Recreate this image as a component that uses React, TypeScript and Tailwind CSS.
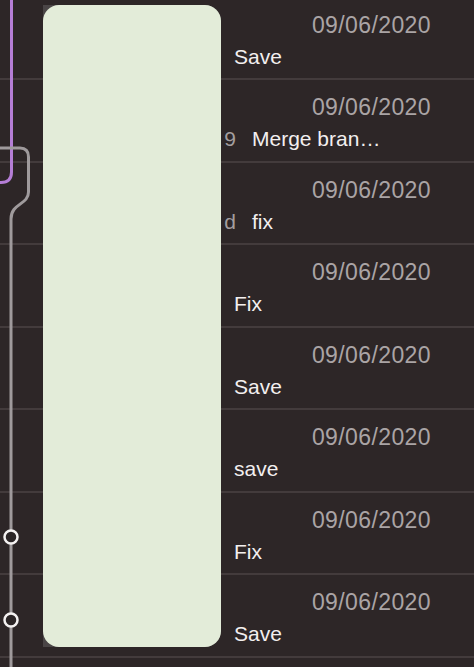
const commits = [
  { hash: "", message: "Save" },
  { hash: "9", message: "Merge bran…" },
  { hash: "d", message: "fix" },
  { hash: "", message: "Fix" },
  { hash: "", message: "Save" },
  { hash: "", message: "save" },
  { hash: "", message: "Fix" },
  { hash: "", message: "Save" },
];

function Graph() {
  return (
    <svg
      className="absolute left-0 top-0"
      width="40"
      height="667"
      viewBox="0 0 40 667"
      fill="none"
    >
      {/* branch lane */}
      <path d="M11.5 -2 V172 Q11.5 182.5 1 182.5 H-4" stroke="#b57ed6" strokeWidth="3" />
      {/* main lane */}
      <path
        d="M-4 148 H20 Q28.5 148 28.5 157 V192 C28.5 205 11 203 11 219 V670"
        stroke="#9f9a9c"
        strokeWidth="3"
      />
      <circle cx="11" cy="537" r="6.5" fill="#2b2526" stroke="#f4f1f1" strokeWidth="2.5" />
      <circle cx="11" cy="620" r="6.5" fill="#2b2526" stroke="#f4f1f1" strokeWidth="2.5" />
    </svg>
  );
}

export default function App() {
  return (
    <div
      className="relative w-[474px] h-[667px] overflow-hidden bg-[#2d2627]"
      style={{ fontFamily: '"Liberation Sans", Arial, sans-serif' }}
    >
      <div className="-mt-[2.5px]">
        {commits.map((c, i) => (
          <div
            key={i}
            className="h-[82.5px] border-b-2 border-[#433b3c] flex flex-col pt-[16px]"
          >
            <div className="text-right pr-[43px] text-[23px] leading-none tracking-[0.4px] text-[#aaa4a5]">
              09/06/2020
            </div>
            <div className="mt-[9px] flex text-[21px] leading-none">
              {c.hash ? (
                <>
                  <span className="w-[236px] text-right text-[#a49e9f]">{c.hash}</span>
                  <span className="ml-[16px] text-[#f3efef]">{c.message}</span>
                </>
              ) : (
                <span className="pl-[234px] text-[#f3efef]">{c.message}</span>
              )}
            </div>
          </div>
        ))}
      </div>

      <Graph />

      {/* preview panel overlay */}
      <div className="absolute left-[43px] top-[5px] w-[178px] h-[642px] bg-[#4a4546] rounded-r-[16px]">
        <div className="w-full h-full rounded-[16px] bg-[#e3ecd9]" />
      </div>
    </div>
  );
}
